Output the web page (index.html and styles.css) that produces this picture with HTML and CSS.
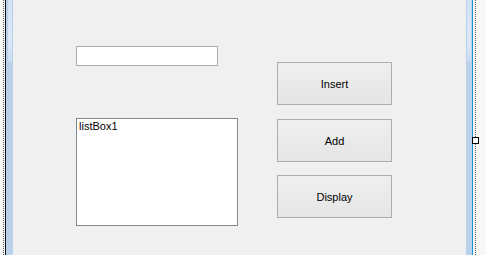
FILE: index.html
```html
<!DOCTYPE html>
<html>
<head>
<meta charset="utf-8">
<link rel="stylesheet" href="styles.css">
</head>
<body>
<div class="designer">
  <div class="sel-line"></div>
  <div class="gap1"></div>
  <div class="edge-dark"></div>
  <div class="frame frame-left"></div>
  <div class="form">
    <div class="col-left">
      <div class="textbox"></div>
      <div class="listbox">listBox1</div>
    </div>
    <div class="col-right">
      <div class="button btn-insert">Insert</div>
      <div class="button btn-add">Add</div>
      <div class="button btn-display">Display</div>
    </div>
  </div>
  <div class="frame frame-right"></div>
  <div class="edge-blue"></div>
  <div class="gap2"></div>
  <div class="sel-line sel-right">
    <div class="handle"></div>
  </div>
</div>
</body>
</html>
```
FILE: styles.css
```css
html, body {
  margin: 0;
  padding: 0;
}
body {
  width: 486px;
  height: 255px;
  overflow: hidden;
  background: #f7f7f7;
  font-family: "Liberation Sans", Arial, sans-serif;
  font-size: 11px;
  color: #000;
}
.designer {
  display: flex;
  height: 255px;
  padding-left: 3px;
}
.sel-line {
  width: 1px;
  height: 255px;
  background-image: linear-gradient(#5a5a5a 50%, transparent 50%);
  background-size: 1px 2px;
}
.sel-right {
  position: relative;
}
.handle {
  position: absolute;
  left: -3px;
  top: 137px;
  width: 5px;
  height: 5px;
  border: 1px solid #000;
  background: #fff;
}
.gap1 {
  width: 1px;
}
.gap2 {
  width: 2px;
}
.edge-dark {
  width: 1px;
  background: #111;
}
.edge-blue {
  width: 1px;
  background: #1e96d8;
}
.frame {
  background: #b9d1ea;
}
.frame-left {
  width: 7px;
  background:
    linear-gradient(#d2e2f4, #dde9f7 40px, #cbdcf0 62px) no-repeat 2px 0 / 4px 62px,
    #b9d1ea;
}
.frame-right {
  width: 6px;
  background:
    linear-gradient(#d2e2f4, #dde9f7 40px, #cbdcf0 62px) no-repeat 1px 0 / 4px 62px,
    #b9d1ea;
}
.form {
  width: 453px;
  background: #f0f0f0;
  display: flex;
  align-items: flex-start;
  padding: 46px 0 0 63px;
  box-sizing: border-box;
  gap: 39px;
}
.col-left {
  display: flex;
  flex-direction: column;
}
.textbox {
  width: 140px;
  height: 18px;
  border: 1px solid #abadb3;
  background: #fff;
}
.listbox {
  margin-top: 52px;
  width: 156px;
  height: 105px;
  border: 1px solid #828790;
  background: #fff;
  padding: 1px 2px 0 2px;
  line-height: 13px;
}
.col-right {
  display: flex;
  flex-direction: column;
  padding-top: 16px;
}
.button {
  width: 113px;
  height: 41px;
  border: 1px solid #adadad;
  background: linear-gradient(#efefef, #e5e5e5);
  display: flex;
  align-items: center;
  justify-content: center;
}
.btn-add {
  margin-top: 14px;
}
.btn-display {
  margin-top: 13px;
}
```
